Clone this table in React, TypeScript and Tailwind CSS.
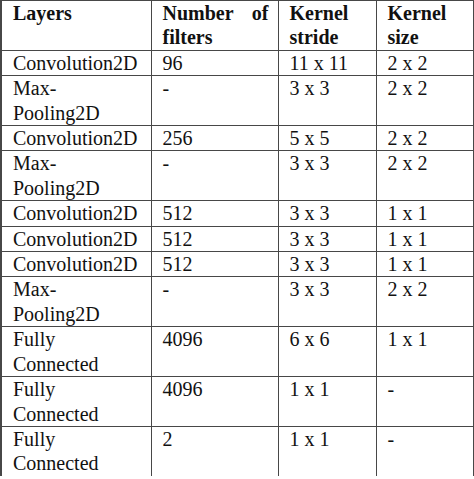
const rows: [string, string, string, string][] = [
  ['Convolution2D', '96', '11 x 11', '2 x 2'],
  ['Max-Pooling2D', '-', '3 x 3', '2 x 2'],
  ['Convolution2D', '256', '5 x 5', '2 x 2'],
  ['Max-Pooling2D', '-', '3 x 3', '2 x 2'],
  ['Convolution2D', '512', '3 x 3', '1 x 1'],
  ['Convolution2D', '512', '3 x 3', '1 x 1'],
  ['Convolution2D', '512', '3 x 3', '1 x 1'],
  ['Max-Pooling2D', '-', '3 x 3', '2 x 2'],
  ['Fully Connected', '4096', '6 x 6', '1 x 1'],
  ['Fully Connected', '4096', '1 x 1', '-'],
  ['Fully Connected', '2', '1 x 1', '-'],
];

const cell = 'border border-[#474747] align-top pl-[11px] pr-[9px] py-0';

export default function App() {
  return (
    <div className="w-[474px] h-[479px] overflow-hidden bg-white">
      <table
        className="table-fixed border-collapse w-[472px] text-[20px] leading-[24.4px] text-[#111]"
        style={{ fontFamily: '"Liberation Serif", "Times New Roman", serif' }}
      >
        <colgroup>
          <col className="w-[150px]" />
          <col className="w-[127px]" />
          <col className="w-[98px]" />
          <col className="w-[97px]" />
        </colgroup>
        <thead>
          <tr className="font-bold">
            <th className={`${cell} text-left border-l-2`}>Layers</th>
            <th className={`${cell} text-justify`}>Number of filters</th>
            <th className={`${cell} text-left`}>Kernel stride</th>
            <th className={`${cell} text-left`}>Kernel size</th>
          </tr>
        </thead>
        <tbody>
          {rows.map((r, i) => (
            <tr key={i} className={i === rows.length - 1 ? '[&>td]:border-b-0' : ''}>
              <td className={`${cell} border-l-2`}>{r[0]}</td>
              <td className={cell}>{r[1]}</td>
              <td className={cell}>{r[2]}</td>
              <td className={cell}>{r[3]}</td>
            </tr>
          ))}
        </tbody>
      </table>
    </div>
  );
}
